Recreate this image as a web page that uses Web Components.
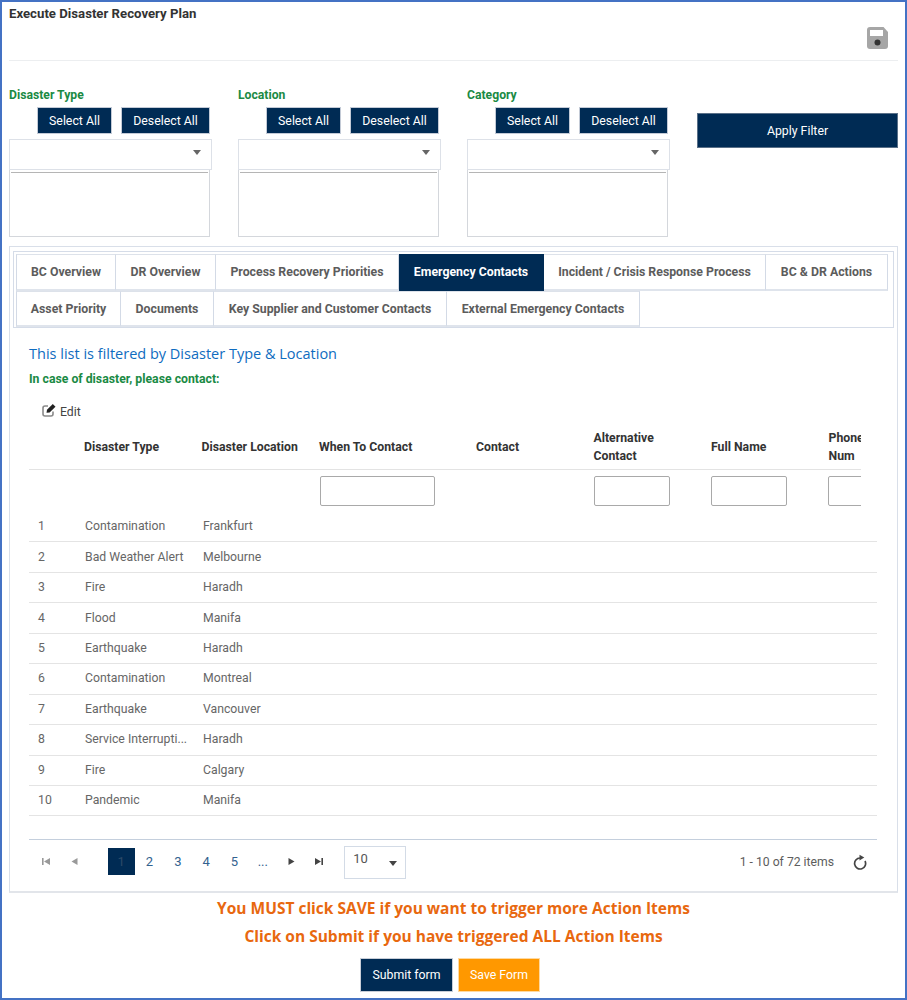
<!DOCTYPE html>
<html><head><meta charset="utf-8">
<style>html,body{margin:0;padding:0;background:#fff}body{font-family:Roboto,"Liberation Sans",sans-serif}</style>
</head><body>
<dr-page></dr-page>
<script>
const def=(name,html)=>customElements.define(name,class extends HTMLElement{
  connectedCallback(){ if(this.shadowRoot) return; const r=this.attachShadow({mode:'open'}); r.innerHTML=typeof html==='function'?html(this):html; }
});
const A=(el,n,d='')=>el.getAttribute(n)??d;

def('dr-btn',el=>`<style>:host{display:block}
button{display:block;box-sizing:border-box;width:100%;height:100%;margin:0;padding:0;background:${A(el,'bg','#002b54')};color:#fff;border:1px solid ${A(el,'bd','#c3cad6')};font:400 12.3px Roboto,sans-serif}</style><button><slot></slot></button>`);

def('dr-filter',el=>`<style>:host{display:block;width:203px}
.l{font:700 12.200px/16px Roboto,sans-serif;height:14px;margin-bottom:6px;color:#1a8a44}
.b{display:flex;justify-content:flex-end;gap:9px;width:201px;height:27px;margin-bottom:5px}
.s{box-sizing:border-box;height:31px;width:203px;border:1px solid #dde1e8;display:flex;align-items:center;justify-content:flex-end;padding:0 10px 4px 0}
.t{width:0;height:0;border:4px solid transparent;border-top:5px solid #666;border-bottom:0}
.lb{box-sizing:border-box;width:201px;height:67px;border:1px solid #d4d7dc;border-top:0;padding:2px 1px 0}
.lb i{display:block;height:1px;background:#b5b5b5}
</style><div class="l">${A(el,'label')}</div>
<div class="b"><dr-btn style="width:75px">Select All</dr-btn><dr-btn style="width:89px">Deselect All</dr-btn></div>
<div class="s"><span class="t"></span></div><div class="lb"><i></i></div>`);

def('dr-tab',el=>`<style>:host{display:flex;box-sizing:border-box;width:${A(el,'w')}px;height:${A(el,'h','37')}px;align-items:center;justify-content:center;
border:1px solid #d3dae6;border-left:0;border-bottom:2px solid #dfe4ec;border-top:1px solid #dde2ea;font:700 12.300px Roboto,sans-serif;color:#5c5c5c;white-space:nowrap;background:#fff}
:host([first]){border-left:1px solid #d3dae6}
:host([active]){background:#002b54;color:#fff;border-color:#002b54}</style><slot></slot>`);

def('dr-tabstrip',`<style>:host{display:flex;flex-wrap:wrap;box-sizing:border-box;margin:4px 3px 0;height:77px;padding:2px 2px 0;border:1px solid #d5dce8;align-content:flex-start}
</style><slot></slot>`);

const cols='55px 117.5px 117.5px 157px 117.5px 117.5px 117.5px 117px';
def('dr-head',`<style>:host{display:block;width:832px;overflow:hidden}
.h{display:grid;grid-template-columns:${cols};width:932px;height:45px;border-bottom:1px solid #e3e3e3;align-items:center;font:700 12.250px/18px Roboto,sans-serif;color:#333}
.f{display:grid;grid-template-columns:${cols};width:932px;height:42px;align-items:start}
.f i{display:block;box-sizing:border-box;height:30px;margin-top:6px;border:1px solid #a9a9a9;border-radius:2px;background:#fff}
.f i.w{width:115px;margin-left:1px}.f i.n{width:75.500px}
span{display:block}</style>
<div class="h"><span></span><span>Disaster Type</span><span>Disaster Location</span><span>When To Contact</span><span>Contact</span><span>Alternative<br>Contact</span><span>Full Name</span><span>Phone<br>Num</span></div>
<div class="f"><span></span><span></span><span></span><i class="w"></i><span></span><i class="n" style="margin-left:.5px"></i><i class="n"></i><i class="n" style="margin-left:-.5px"></i></div>`);

def('dr-row',el=>`<style>:host{display:grid;grid-template-columns:56px 118px 1fr;height:30.45px;box-sizing:border-box;border-bottom:1px solid #e4e4e4;align-items:center;font:400 12.250px Roboto,sans-serif;color:#666;padding-bottom:1px}
span{white-space:nowrap}
.n{padding-left:9px}
</style><span class="n">${A(el,'n')}</span><span>${A(el,'t')}</span><span>${A(el,'l')}</span>`);

def('dr-pager',`<style>:host{display:flex;align-items:center;box-sizing:border-box;height:52px;border-top:1px solid #c4cfdd;font:400 12.200px Roboto,sans-serif;color:#444;padding-bottom:8px}
.g{width:28.33px;display:flex;justify-content:center;align-items:center}
.nb{color:#33628f;font-size:13px}
.cur{width:27px;height:27px;background:#002b54;color:#2c4a68;display:flex;align-items:center;justify-content:center;font-size:13px;margin-right:.7px}
.sel{box-sizing:border-box;width:62px;height:33px;border:1px solid #d3dbe6;display:flex;margin-left:11px;padding:4px 0 0 8px;color:#555;margin-top:1px;font-size:13px}
.sel b{width:0;height:0;border:4.500px solid transparent;border-top:5px solid #444;border-bottom:0;margin:10px 8px 0 auto}
.info{margin-left:auto;color:#5d5d5d;margin-right:17.500px}
svg{display:block}
.r{margin-right:9.500px}
</style>
<span class="g" style="margin-left:3px"><svg width="9" height="9" viewBox="0 0 9 9"><path fill="#999" d="M0 1h1.600v7H0zM8 1v7L2 4.500z"/></svg></span>
<span class="g"><svg width="7" height="9" viewBox="0 0 7 9"><path fill="#999" d="M6.500 1v7L.5 4.500z"/></svg></span>
<span style="width:19px"></span>
<span class="cur">1</span>
<span class="g nb">2</span><span class="g nb">3</span><span class="g nb">4</span><span class="g nb">5</span><span class="g nb">...</span>
<span class="g"><svg width="7" height="9" viewBox="0 0 7 9"><path fill="#444" d="M.5 1v7l6-3.500z"/></svg></span>
<span class="g" style="margin-left:-.5px"><svg width="9" height="9" viewBox="0 0 9 9"><path fill="#444" d="M9 1H7.400v7H9zM1 1v7l6-3.500z"/></svg></span>
<span class="sel">10<b></b></span>
<span class="info">1 - 10 of 72 items</span>
<span class="r"><svg width="16" height="16" viewBox="0 0 16 16"><path fill="none" stroke="#444" stroke-width="1.700" d="M8 4A5.500 5.500 0 1 0 13 7"/><path fill="#444" d="M7.500 .8 12.300 3.600 7.500 6.600z"/></svg></span>`);

def('dr-grid',`<style>:host{display:block;margin:3px 20px 0 19px}
.gap{height:23px}</style>
<dr-head></dr-head>
<div>
<dr-row n="1" t="Contamination" l="Frankfurt"></dr-row>
<dr-row n="2" t="Bad Weather Alert" l="Melbourne"></dr-row>
<dr-row n="3" t="Fire" l="Haradh"></dr-row>
<dr-row n="4" t="Flood" l="Manifa"></dr-row>
<dr-row n="5" t="Earthquake" l="Haradh"></dr-row>
<dr-row n="6" t="Contamination" l="Montreal"></dr-row>
<dr-row n="7" t="Earthquake" l="Vancouver"></dr-row>
<dr-row n="8" t="Service Interrupti..." l="Haradh"></dr-row>
<dr-row n="9" t="Fire" l="Calgary"></dr-row>
<dr-row n="10" t="Pandemic" l="Manifa"></dr-row>
</div><div class="gap"></div><dr-pager></dr-pager>`);

def('dr-page',`<style>:host{display:block;box-sizing:border-box;width:907px;height:1000px;border:2px solid #4472c4;padding:0 7px;overflow:hidden;font-family:Roboto,sans-serif}
.hd{display:flex;justify-content:space-between;height:59px;box-sizing:border-box;border-bottom:1px solid #eceef0}
h1{margin:5px 0 0;font:700 13.200px/14px Roboto,sans-serif;color:#333}
.sv{margin:25px 10px 0 0}
.fr{display:flex;gap:26px;margin-top:26px;height:150px}
.ap{width:201px;height:35px;margin:26px 0 0 1px}
.box{box-sizing:border-box;height:647px;margin-top:9px;border:1px solid #d9dfe9;border-bottom:2px solid #e2e5ea}
.t1{margin:16px 0 0 19px;font:400 14.500px/20px "Open Sans",sans-serif;color:#0f6cc0}
.t2{margin:8px 0 0 19px;font:700 12.250px/14px Roboto,sans-serif;color:#1a8a44}
.ed{display:flex;align-items:center;gap:4px;margin:16px 0 0 32px;height:19px;font:400 12.250px Roboto,sans-serif;color:#444}
.ed svg{margin-top:-3px}
.msg{text-align:center;font:700 15.500px/28px "Open Sans",sans-serif;color:#e8680f}
.m1{margin-top:1px}
.acts{display:flex;justify-content:center;gap:5px;margin-top:8px;height:34px;padding-right:7px}
</style>
<div class="hd"><h1>Execute Disaster Recovery Plan</h1>
<svg class="sv" width="21" height="22" viewBox="0 0 21 22"><path fill="#a6a6a6" d="M3 0h13.500L21 5v14a3 3 0 0 1-3 3H3a3 3 0 0 1-3-3V3a3 3 0 0 1 3-3z"/><path fill="#fff" d="M3 3h13v6H3z"/><circle cx="10.500" cy="15.500" r="3" fill="#333"/></svg></div>
<div class="fr"><dr-filter label="Disaster Type"></dr-filter><dr-filter label="Location"></dr-filter><dr-filter label="Category"></dr-filter><dr-btn class="ap" bd="#5a7088">Apply Filter</dr-btn></div>
<div class="box">
<dr-tabstrip>
<dr-tab first w="100">BC Overview</dr-tab><dr-tab w="100">DR Overview</dr-tab><dr-tab w="183">Process Recovery Priorities</dr-tab><dr-tab w="145" active>Emergency Contacts</dr-tab><dr-tab w="222">Incident / Crisis Response Process</dr-tab><dr-tab w="122">BC &amp; DR Actions</dr-tab>
<dr-tab first w="105" h="36">Asset Priority</dr-tab><dr-tab w="93" h="36">Documents</dr-tab><dr-tab w="233" h="36">Key Supplier and Customer Contacts</dr-tab><dr-tab w="193" h="36">External Emergency Contacts</dr-tab>
</dr-tabstrip>
<div class="t1">This list is filtered by Disaster Type &amp; Location</div>
<div class="t2">In case of disaster, please contact:</div>
<div class="ed"><svg width="14" height="14" viewBox="0 0 14 14"><path fill="none" stroke="#8a8a8a" stroke-width="1.600" d="M11 8.500V11a2 2 0 0 1-2 2H3a2 2 0 0 1-2-2V5a2 2 0 0 1 2-2h3"/><path fill="#222" d="M4.500 9.800 5 6.800 10.800 1 13.500 3.700 7.600 9.500z"/></svg>Edit</div>
<dr-grid></dr-grid>
</div>
<div class="msg m1">You MUST click SAVE if you want to trigger more Action Items</div>
<div class="msg">Click on Submit if you have triggered ALL Action Items</div>
<div class="acts"><dr-btn style="width:93px" bd="#c8ced8">Submit form</dr-btn><dr-btn style="width:82px" bg="#ff9800" bd="#ffd9a0">Save Form</dr-btn></div>`);
</script>
</body></html>
